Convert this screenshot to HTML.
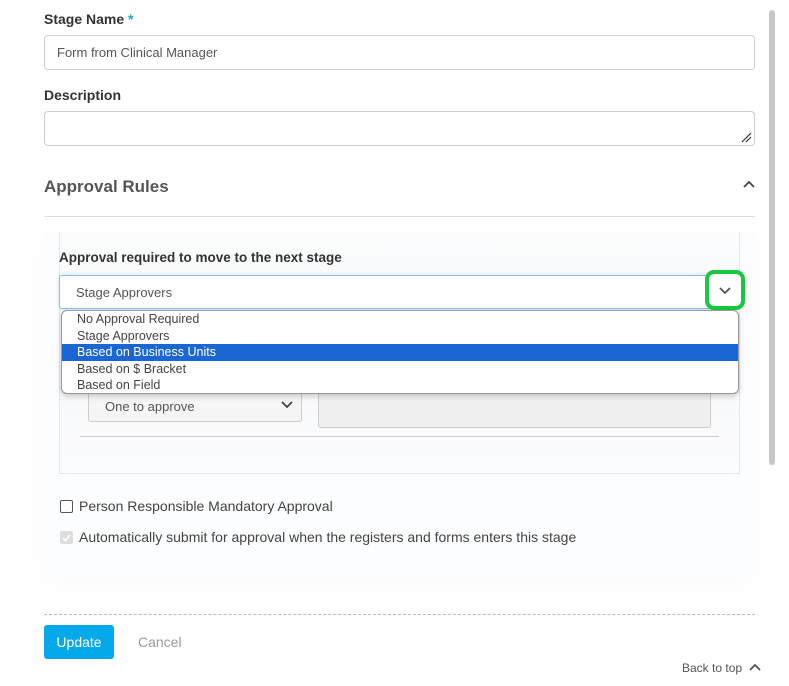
<!DOCTYPE html><html><head><style>
*{box-sizing:border-box;margin:0;padding:0}
body{width:789px;height:686px;background:#fff;font-family:"Liberation Sans",sans-serif;position:relative;overflow:hidden;color:#333}
.a{position:absolute}
.lbl{font-size:14px;font-weight:bold;color:#333}
.inp{border:1px solid #ccc;border-radius:4px;background:#fff}
</style></head><body>
<div class="a lbl" style="left:44px;top:11px">Stage Name <span style="color:#1aa3d9">*</span></div>
<div class="a inp" style="left:44px;top:35px;width:711px;height:35px;font-size:13px;color:#555;padding:9px 12px">Form from Clinical Manager</div>
<div class="a lbl" style="left:44px;top:87px">Description</div>
<div class="a inp" style="left:44px;top:111px;width:711px;height:35px"></div>
<svg class="a" style="left:739px;top:130px" width="14" height="14"><path d="M3 12L12 3M7 12L12 7" stroke="#333" stroke-width="1.2"/></svg>
<div class="a" style="left:44px;top:177px;font-size:17px;font-weight:bold;color:#555">Approval Rules</div>
<svg class="a" style="left:743px;top:180px" width="12" height="10"><path d="M1 7L6 2L11 7" stroke="#444" stroke-width="1.8" fill="none"/></svg>
<div class="a" style="left:44px;top:216px;width:711px;height:1px;background:#ddd"></div>
<div class="a" style="left:44px;top:232px;width:711px;height:343px;background:#fcfdfe;box-shadow:0 6px 24px rgba(0,0,0,.025)"></div>
<div class="a" style="left:59px;top:232px;width:681px;height:242px;border:1px solid #dde9f5;border-top:none;background:linear-gradient(#fbfcfd,#f7f8fa 60%,#fbfcfd)"></div>
<div class="a lbl" style="left:59px;top:250px;font-size:13.5px">Approval required to move to the next stage</div>
<div class="a" style="left:88px;top:390px;width:214px;height:32px;border:1px solid #ccc;border-radius:3px;font-size:13px;color:#555;padding:8px 16px;background:#f5f5f5">One to approve</div>
<svg class="a" style="left:280px;top:400px" width="14" height="10"><path d="M2 2L7 7L12 2" stroke="#444" stroke-width="1.8" fill="none"/></svg>
<div class="a" style="left:318px;top:390px;width:393px;height:38px;border:1px solid #ccc;border-radius:3px;background:#f0f0f0"></div>
<div class="a" style="left:80px;top:436px;width:639px;height:1px;background:#ccc"></div>
<div class="a" style="left:59px;top:275px;width:681px;height:34px;border:1px solid #8cbce9;border-radius:3px;background:#fff;font-size:13px;color:#555;padding:9px 16px;box-shadow:0 0 4px rgba(100,160,230,.3)">Stage Approvers</div>
<div class="a" style="left:705px;top:270px;width:40px;height:40px;border:4px solid #17c93e;border-radius:9px;background:#fff"></div>
<svg class="a" style="left:718px;top:286px" width="14" height="10"><path d="M2 2L7 7L12 2" stroke="#555" stroke-width="1.8" fill="none"/></svg>
<div class="a" style="left:61px;top:310px;width:678px;height:84px;border:1px solid #999;border-radius:6px;background:#fff;box-shadow:0 2px 6px rgba(0,0,0,.2);font-size:12.5px;color:#444;overflow:hidden">
<div style="height:16.5px;line-height:16px;padding-left:15px">No Approval Required</div>
<div style="height:16.5px;line-height:16px;padding-left:15px">Stage Approvers</div>
<div style="height:16.5px;line-height:16px;padding-left:15px;background:#1a66d2;color:#fff">Based on Business Units</div>
<div style="height:16.5px;line-height:16px;padding-left:15px">Based on $ Bracket</div>
<div style="height:16.5px;line-height:16px;padding-left:15px">Based on Field</div>
</div>
<div class="a" style="left:60px;top:500px;width:13px;height:13px;border:1px solid #555;border-radius:2px;background:#fff"></div>
<div class="a" style="left:79px;top:498px;font-size:14px;color:#444">Person Responsible Mandatory Approval</div>
<div class="a" style="left:60px;top:531px;width:13px;height:13px;border-radius:2px;background:#ddd"></div>
<svg class="a" style="left:61px;top:532px" width="11" height="11"><path d="M2 6L4.5 8.5L9 3" stroke="#fff" stroke-width="1.6" fill="none"/></svg>
<div class="a" style="left:79px;top:529px;font-size:14px;color:#444">Automatically submit for approval when the registers and forms enters this stage</div>
<div class="a" style="left:44px;top:614px;width:711px;border-top:1px dashed #bbb"></div>
<div class="a" style="left:44px;top:625px;width:70px;height:34px;background:#03a9e8;border-radius:3px;color:#fff;font-size:14px;text-align:center;line-height:34px">Update</div>
<div class="a" style="left:138px;top:634px;font-size:14px;color:#999">Cancel</div>
<div class="a" style="left:682px;top:661px;font-size:12px;color:#555">Back to top</div>
<svg class="a" style="left:749px;top:663px" width="12" height="9"><path d="M1 7L6 2L11 7" stroke="#555" stroke-width="1.8" fill="none"/></svg>
<div class="a" style="left:769px;top:10px;width:6px;height:455px;background:#c8c8c8;border-radius:3px"></div>
</body></html>
